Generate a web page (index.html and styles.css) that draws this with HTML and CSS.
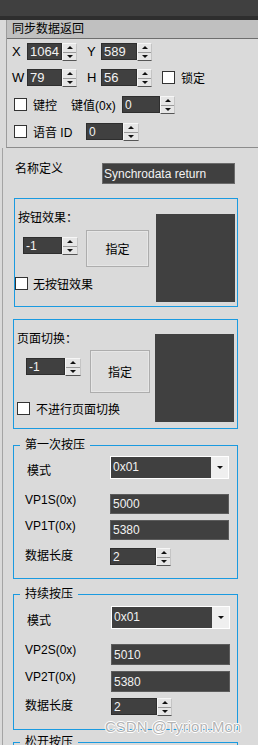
FILE: index.html
```html
<!DOCTYPE html>
<html>
<head>
    <meta charset="utf-8">
    <link rel="stylesheet" href="styles.css">
</head>
<body>
    <div class="topbar"></div>

    <div class="sync">
        <div class="sync-head">同步数据返回</div>
        <div class="sync-body">
            <div class="row row-1">
                <span class="axis axis-x">X</span>
                <div class="spin">
                    <input class="num num-x" value="1064">
                    <div class="spin-btn"><span class="up"></span><span class="down"></span></div>
                </div>
                <span class="axis axis-y">Y</span>
                <div class="spin">
                    <input class="num num-y" value="589">
                    <div class="spin-btn"><span class="up"></span><span class="down"></span></div>
                </div>
            </div>
            <div class="row row-2">
                <span class="axis axis-x">W</span>
                <div class="spin">
                    <input class="num num-x" value="79">
                    <div class="spin-btn"><span class="up"></span><span class="down"></span></div>
                </div>
                <span class="axis axis-y">H</span>
                <div class="spin">
                    <input class="num num-y" value="56">
                    <div class="spin-btn"><span class="up"></span><span class="down"></span></div>
                </div>
                <span class="check lock-check"></span>
                <span class="check-text">锁定</span>
            </div>
            <div class="row row-3">
                <span class="check first-check"></span>
                <span class="check-text key-lbl">键控</span>
                <span class="keyval-lbl">键值(0x)</span>
                <div class="spin">
                    <input class="num num-key" value="0">
                    <div class="spin-btn"><span class="up"></span><span class="down"></span></div>
                </div>
            </div>
            <div class="row row-4">
                <span class="check first-check"></span>
                <span class="check-text voice-lbl">语音 ID</span>
                <div class="spin">
                    <input class="num num-voice" value="0">
                    <div class="spin-btn wide"><span class="up"></span><span class="down"></span></div>
                </div>
            </div>
        </div>
    </div>

    <div class="props">
        <div class="name-row">
            <span class="name-lbl">名称定义</span>
            <input class="name-input" value="Synchrodata return">
        </div>

        <div class="effect-box box-button">
            <div class="effect-main">
                <div class="effect-title">按钮效果：</div>
                <div class="effect-ctrl">
                    <div class="spin">
                        <input class="num num-effect" value="-1">
                        <div class="spin-btn wide"><span class="up"></span><span class="down"></span></div>
                    </div>
                    <button class="assign">指定</button>
                </div>
                <div class="effect-check">
                    <span class="check"></span>
                    <span class="check-text">无按钮效果</span>
                </div>
            </div>
            <div class="preview"></div>
        </div>

        <div class="effect-box box-page">
            <div class="effect-main">
                <div class="effect-title">页面切换：</div>
                <div class="effect-ctrl">
                    <div class="spin">
                        <input class="num num-effect" value="-1">
                        <div class="spin-btn wide"><span class="up"></span><span class="down"></span></div>
                    </div>
                    <button class="assign">指定</button>
                </div>
                <div class="effect-check">
                    <span class="check"></span>
                    <span class="check-text">不进行页面切换</span>
                </div>
            </div>
            <div class="preview"></div>
        </div>

        <fieldset class="press press-first">
            <legend>第一次按压</legend>
            <div class="p-row">
                <span class="p-lbl lbl-mode">模式</span>
                <div class="select">
                    <span class="select-val">0x01</span>
                    <span class="select-arrow"></span>
                </div>
            </div>
            <div class="p-row row-vp">
                <span class="p-lbl lbl-vp">VP1S(0x)</span>
                <input class="vp-input" value="5000">
            </div>
            <div class="p-row row-vp2">
                <span class="p-lbl lbl-vp">VP1T(0x)</span>
                <input class="vp-input" value="5380">
            </div>
            <div class="p-row row-len">
                <span class="p-lbl lbl-len">数据长度</span>
                <div class="spin">
                    <input class="num num-len" value="2">
                    <div class="spin-btn"><span class="up"></span><span class="down"></span></div>
                </div>
            </div>
        </fieldset>

        <fieldset class="press press-hold">
            <legend>持续按压</legend>
            <div class="p-row">
                <span class="p-lbl lbl-mode">模式</span>
                <div class="select">
                    <span class="select-val">0x01</span>
                    <span class="select-arrow"></span>
                </div>
            </div>
            <div class="p-row row-vp">
                <span class="p-lbl lbl-vp">VP2S(0x)</span>
                <input class="vp-input" value="5010">
            </div>
            <div class="p-row row-vp2">
                <span class="p-lbl lbl-vp">VP2T(0x)</span>
                <input class="vp-input" value="5380">
            </div>
            <div class="p-row row-len">
                <span class="p-lbl lbl-len">数据长度</span>
                <div class="spin">
                    <input class="num num-len" value="2">
                    <div class="spin-btn"><span class="up"></span><span class="down"></span></div>
                </div>
            </div>
        </fieldset>

        <fieldset class="press press-release">
            <legend>松开按压</legend>
        </fieldset>
    </div>

    <div class="watermark">CSDN @Tyrion.Mon</div>
</body>
</html>
```

FILE: styles.css
```css
* {
    box-sizing: border-box;
}

body {
    margin: 0;
    width: 258px;
    height: 745px;
    overflow: hidden;
    position: relative;
    background-color: #dadada;
    font-family: "Liberation Sans", "Noto Sans CJK SC", sans-serif;
    font-size: 12px;
    color: #000;
}

.topbar {
    height: 20px;
    background-color: #404040;
    border-bottom: 4px solid #2e2e2e;
}

/* sync group */
.sync {
    margin-left: 6px;
    border-left: 1px solid #9c9c9c;
    border-bottom: 1px solid #8c8c8c;
}

.sync-head {
    height: 19px;
    line-height: 18px;
    padding-left: 5px;
    background-color: #c0c0c0;
    border-bottom: 1px solid #6e6e6e;
}

.sync-body {
    padding: 4px 0 7px 5px;
}

.row {
    display: flex;
    align-items: center;
    height: 17px;
    margin-bottom: 10px;
}

.row-1 {
    margin-bottom: 9px;
}

.row-4 {
    margin-bottom: 0;
}

.axis {
    font-size: 13px;
}

.axis-x {
    width: 15px;
}

.axis-y {
    width: 14px;
    margin-left: 10px;
}

.check {
    display: block;
    width: 13px;
    height: 13px;
    flex: none;
    background-color: #fff;
    border: 1px solid #333;
}

.check-text {
    margin-left: 6px;
}

.lock-check {
    margin-left: 10px;
}

.first-check {
    margin-left: 2px;
}

.key-lbl {
    width: 38px;
}

.keyval-lbl {
    width: 51px;
}

.voice-lbl {
    width: 53px;
}

/* spin boxes */
.spin {
    display: flex;
    height: 17px;
}

.num {
    height: 17px;
    margin: 0;
    padding: 0 0 0 2px;
    border: 1px solid #2e2e2e;
    background-color: #404040;
    color: #f2f2f2;
    font-family: inherit;
    font-size: 12px;
    outline: none;
}

.num-x {
    width: 35px;
    font-size: 13px;
}

.num-y {
    width: 36px;
    font-size: 13px;
}

.num-key {
    width: 38px;
}

.num-voice {
    width: 37px;
}

.num-effect {
    width: 39px;
}

.num-len {
    width: 46px;
}

.spin-btn {
    width: 15px;
    height: 18px;
    display: flex;
    flex-direction: column;
    background-color: #e6e6e6;
    border: 1px solid #f6f6f6;
    border-right-color: #c4c4c4;
    border-bottom-color: #555;
}

.spin-btn.wide {
    width: 16px;
}

.spin-btn span {
    flex: 1;
    display: flex;
    align-items: center;
    justify-content: center;
}

.spin-btn .down {
    border-top: 1px solid #9a9a9a;
}

.spin-btn .up::before {
    content: "";
    border-left: 3px solid transparent;
    border-right: 3px solid transparent;
    border-bottom: 3px solid #111;
}

.spin-btn .down::before {
    content: "";
    border-left: 3px solid transparent;
    border-right: 3px solid transparent;
    border-top: 3px solid #111;
}

/* properties */
.props {
    margin-left: 2px;
    height: 600px;
    padding-top: 15px;
    border-left: 1px solid #a4a4a4;
}

.name-row {
    display: flex;
    align-items: flex-start;
    padding-left: 12px;
}

.name-lbl {
    width: 87px;
    line-height: 14px;
    margin-top: -1px;
}

.name-input {
    width: 133px;
    height: 21px;
    margin: 0;
    padding: 0 0 0 1px;
    border: 1px solid #6b6b6b;
    background-color: #404040;
    color: #f2f2f2;
    font-family: inherit;
    font-size: 12px;
    outline: none;
}

.effect-box {
    display: flex;
    border: 1px solid #1a9ae0;
}

.effect-main {
    flex: 1;
}

.effect-title {
    line-height: 16px;
    margin: 11px 0 0 3px;
}

.effect-ctrl {
    display: flex;
    align-items: flex-start;
}

.effect-check {
    display: flex;
    align-items: center;
}

.assign {
    margin: 0;
    padding: 0;
    background-color: #dcdcdc;
    border: 1px solid #adadad;
    box-shadow: inset 0 0 0 1px #e6e6e6;
    font-family: inherit;
    font-size: 12px;
    color: #000;
}

.preview {
    width: 79px;
    height: 88px;
    background-color: #404040;
}

.box-button {
    width: 224px;
    height: 109px;
    margin: 14px 0 0 11px;
}

.box-button .effect-ctrl {
    margin-top: 4px;
}

.box-button .spin {
    margin: 7px 0 0 8px;
}

.box-button .assign {
    width: 63px;
    height: 37px;
    margin-left: 8px;
}

.box-button .effect-check {
    margin-top: 8px;
}

.box-button .effect-check .check-text {
    margin-left: 5px;
}

.box-button .preview {
    margin: 15px 2px 0 0;
}

.box-page {
    width: 225px;
    height: 110px;
    margin: 12px 0 0 10px;
}

.box-page .effect-ctrl {
    margin-top: 3px;
}

.box-page .spin {
    margin: 8px 0 0 12px;
}

.box-page .assign {
    width: 60px;
    height: 43px;
    margin-left: 9px;
}

.box-page .effect-check {
    margin: 7px 0 0 3px;
}

.box-page .preview {
    margin: 14px 3px 0 0;
}

/* press groups */
.press {
    width: 225px;
    min-width: 0;
    margin: 9px 0 0 10px;
    padding: 4px 0 13px 6px;
    border: 1px solid #1a9ae0;
}

.press legend {
    padding: 0 5px;
    line-height: 14px;
}

.press-hold {
    margin-top: 8px;
    padding: 5px 0 14px 6px;
}

.press-release {
    margin-top: 5px;
    height: 40px;
}

.p-row {
    display: flex;
    align-items: flex-start;
    padding-left: 5px;
}

.p-lbl {
    width: 85px;
    line-height: 14px;
}

.press-hold .p-lbl {
    width: 86px;
}

.lbl-mode {
    margin-top: 8px;
    padding-left: 2px;
}

.lbl-vp {
    margin-top: -1px;
}

.lbl-len {
    margin-top: 1px;
}

.row-vp {
    margin-top: 15px;
}

.row-vp2 {
    margin-top: 6px;
}

.row-len {
    margin-top: 8px;
}

.press-hold .row-len {
    margin-top: 6px;
}

.select {
    display: flex;
    width: 119px;
    height: 23px;
    background-color: #404040;
    border: 1px solid #fff;
}

.select-val {
    flex: 1;
    padding-left: 2px;
    line-height: 21px;
    color: #f2f2f2;
}

.select-arrow {
    width: 17px;
    display: flex;
    align-items: center;
    justify-content: center;
    background-color: #efefef;
}

.select-arrow::before {
    content: "";
    border-left: 3px solid transparent;
    border-right: 3px solid transparent;
    border-top: 3px solid #111;
}

.vp-input {
    width: 119px;
    height: 20px;
    margin: 0;
    padding: 0 0 0 2px;
    border: 1px solid #5c5c5c;
    background-color: #404040;
    color: #f2f2f2;
    font-family: inherit;
    font-size: 12px;
    outline: none;
}

.press-hold .vp-input {
    height: 21px;
}

.watermark {
    position: absolute;
    left: 105px;
    top: 718px;
    font-size: 15px;
    color: #b4b4b4;
    text-shadow: 0 0 1px #fff, 1px 0 0 #fff, -1px 0 0 #fff, 0 1px 0 #fff, 0 -1px 0 #fff;
}
```
